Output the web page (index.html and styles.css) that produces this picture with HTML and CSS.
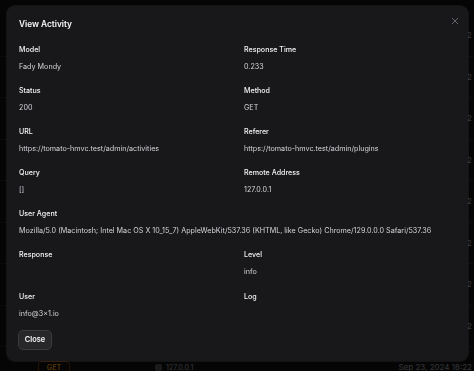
FILE: index.html
```html
<!DOCTYPE html>
<html>
<head>
<meta charset="utf-8">
<link rel="stylesheet" href="styles.css">
</head>
<body>
<div class="page">
  <div class="row"><span class="badge">GET</span><span class="ip"><span class="ip-ic"></span>127.0.0.1</span><span class="date">Sep 23, 2024 16:22</span></div>
  <div class="row"><span class="badge">GET</span><span class="ip"><span class="ip-ic"></span>127.0.0.1</span><span class="date">Sep 23, 2024 16:22</span></div>
  <div class="row"><span class="badge">GET</span><span class="ip"><span class="ip-ic"></span>127.0.0.1</span><span class="date">Sep 23, 2024 16:22</span></div>
  <div class="row"><span class="badge">GET</span><span class="ip"><span class="ip-ic"></span>127.0.0.1</span><span class="date">Sep 23, 2024 16:22</span></div>
  <div class="row"><span class="badge">GET</span><span class="ip"><span class="ip-ic"></span>127.0.0.1</span><span class="date">Sep 23, 2024 16:22</span></div>
  <div class="row"><span class="badge">GET</span><span class="ip"><span class="ip-ic"></span>127.0.0.1</span><span class="date">Sep 23, 2024 16:22</span></div>
  <div class="row"><span class="badge">GET</span><span class="ip"><span class="ip-ic"></span>127.0.0.1</span><span class="date">Sep 23, 2024 16:22</span></div>
  <div class="row"><span class="badge">GET</span><span class="ip"><span class="ip-ic"></span>127.0.0.1</span><span class="date">Sep 23, 2024 16:22</span></div>
  <div class="row"><span class="badge">GET</span><span class="ip"><span class="ip-ic"></span>127.0.0.1</span><span class="date">Sep 23, 2024 16:22</span></div>
</div>
<div class="backdrop"></div>
<div class="modal">
  <div class="head">
    <h2 class="title">View Activity</h2>
    <button class="x" aria-label="Close">
      <svg viewBox="0 0 10 10" width="8" height="8"><path d="M1.5 1.5 L8.5 8.5 M8.5 1.5 L1.5 8.5" stroke="#71717a" stroke-width="1.1" stroke-linecap="round" fill="none"/></svg>
    </button>
  </div>
  <div class="grid">
    <div class="entry"><div class="label">Model</div><div class="value">Fady Mondy</div></div>
    <div class="entry"><div class="label">Response Time</div><div class="value">0.233</div></div>
    <div class="entry"><div class="label">Status</div><div class="value">200</div></div>
    <div class="entry"><div class="label">Method</div><div class="value">GET</div></div>
    <div class="entry"><div class="label">URL</div><div class="value">https://tomato-hmvc.test/admin/activities</div></div>
    <div class="entry"><div class="label">Referer</div><div class="value">https://tomato-hmvc.test/admin/plugins</div></div>
    <div class="entry"><div class="label">Query</div><div class="value">[]</div></div>
    <div class="entry"><div class="label">Remote Address</div><div class="value">127.0.0.1</div></div>
    <div class="entry wide"><div class="label">User Agent</div><div class="value">Mozilla/5.0 (Macintosh; Intel Mac OS X 10_15_7) AppleWebKit/537.36 (KHTML, like Gecko) Chrome/129.0.0.0 Safari/537.36</div></div>
    <div class="entry"><div class="label">Response</div><div class="value"></div></div>
    <div class="entry"><div class="label">Level</div><div class="value">info</div></div>
    <div class="entry"><div class="label">User</div><div class="value">info@3×1.io</div></div>
    <div class="entry"><div class="label">Log</div></div>
  </div>
  <div class="foot">
    <button class="btn">Close</button>
  </div>
</div>
</body>
</html>
```

FILE: styles.css
```css
* { box-sizing: border-box; }
html, body { margin: 0; padding: 0; }
body {
  width: 474px;
  height: 371px;
  overflow: hidden;
  background: #121214;
  font-family: Inter, "Noto Sans", sans-serif;
  color: #e4e4e7;
}
.page {
  padding-top: 15px;
}
.row {
  height: 41.5px;
  display: flex;
  align-items: center;
  font-size: 7.2px;
  color: #a1a1aa;
  border-bottom: 1px solid #232327;
}
.badge {
  margin-left: 38px;
  width: 32px;
  text-align: center;
  color: #f59e0b;
  border: 1px solid #78350f;
  border-radius: 4px;
  padding: 1px 0;
  font-weight: 600;
}
.ip {
  margin-left: 85px;
  display: flex;
  align-items: center;
  gap: 4px;
}
.ip-ic {
  width: 7px;
  height: 7px;
  border-radius: 2px;
  background: #52525b;
}
.date {
  margin-left: auto;
  margin-right: 2px;
  white-space: nowrap;
  font-size: 8px;
}
.backdrop {
  position: fixed;
  inset: 0;
  background: rgba(0, 0, 0, 0.68);
}
.modal {
  position: fixed;
  left: 6.5px;
  top: 5.5px;
  width: 461.5px;
  height: 355px;
  background: #18181b;
  border-radius: 8px;
  box-shadow: 0 0 0 1px rgba(255, 255, 255, 0.06);
  padding: 12.5px 12.5px 10.5px;
  display: flex;
  flex-direction: column;
}
.head {
  display: flex;
  align-items: center;
  justify-content: space-between;
  height: 13px;
}
.title {
  margin: 0;
  font-size: 8.3px;
  line-height: 13px;
  font-weight: 600;
  color: #fafafa;
}
.x {
  background: none;
  border: 0;
  padding: 0;
  margin-right: -3px;
  margin-top: -8px;
  display: flex;
}
.grid {
  margin-top: 12.5px;
  display: grid;
  grid-template-columns: 1fr 1fr;
  column-gap: 13.5px;
  row-gap: 13.2px;
}
.wide { grid-column: span 2; }
.entry {
  display: flex;
  flex-direction: column;
  gap: 6px;
}
.label {
  font-size: 7.1px;
  line-height: 11px;
  font-weight: 500;
  color: #f4f4f5;
}
.value {
  font-size: 7.2px;
  line-height: 11px;
  min-height: 11px;
  color: #d4d4d8;
  white-space: nowrap;
}
.foot {
  margin-top: 11px;
  display: flex;
}
.btn {
  font-family: inherit;
  font-size: 7.4px;
  font-weight: 600;
  color: #fafafa;
  background: #27272a;
  border: 1px solid #3a3a40;
  border-radius: 5px;
  height: 20px;
  width: 34px;
  margin-left: -1px;
  padding: 0;
}
```
